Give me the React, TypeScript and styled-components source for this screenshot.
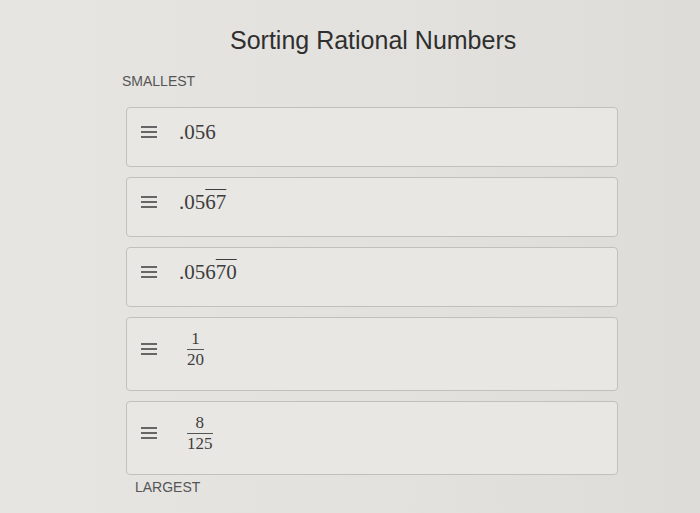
import React from "react";
import styled, { createGlobalStyle } from "styled-components";

const GlobalStyle = createGlobalStyle`
    html, body {
        margin: 0;
        padding: 0;
        background-color: #e4e3e0;
    }
`;

const Page = styled.div`
    width: 700px;
    height: 513px;
    box-sizing: border-box;
    padding: 24px 82px 0 122px;
    font-family: "Liberation Sans", Arial, sans-serif;
    color: #3a3a3a;
    background: linear-gradient(90deg, #e6e5e2 0%, #e2e1de 60%, #dedcd8 100%);
`;

const Title = styled.h1`
    margin: 0 0 16px 108px;
    font-size: 25px;
    font-weight: 400;
    color: #2f2f2f;
    line-height: 32px;
`;

const EndLabel = styled.div<{ $indent?: number }>`
    font-size: 14px;
    color: #555;
    line-height: 18px;
    margin-left: ${(p) => p.$indent ?? 0}px;
`;

const List = styled.div`
    display: flex;
    flex-direction: column;
    gap: 10px;
    margin: 17px 0 3px 4px;
`;

const Card = styled.div<{ $tall?: boolean }>`
    display: flex;
    align-items: center;
    gap: 22px;
    box-sizing: border-box;
    height: ${(p) => (p.$tall ? 74 : 60)}px;
    padding: 0 0 10px 14px;
    border: 1px solid #c1c0bd;
    border-radius: 4px;
    background-color: #e8e7e4;
`;

const Handle = styled.div`
    display: flex;
    flex-direction: column;
    gap: 3px;
    width: 16px;
    span {
        display: block;
        height: 2px;
        background-color: #666;
    }
`;

const Value = styled.div`
    font-family: "Liberation Serif", "Times New Roman", serif;
    font-size: 21px;
    color: #3d3d3d;
`;

const Repeat = styled.span`
    text-decoration: overline;
    text-decoration-thickness: 1px;
`;

const Fraction = styled.div`
    display: inline-flex;
    flex-direction: column;
    align-items: center;
    margin-left: 8px;
    font-family: "Liberation Serif", "Times New Roman", serif;
    font-size: 17px;
    color: #3d3d3d;
    line-height: 19px;
`;

const Numerator = styled.span`
    padding: 0 2px 1px;
    border-bottom: 1px solid #555;
    align-self: stretch;
    text-align: center;
`;

const DragHandle = () => (
    <Handle>
        <span />
        <span />
        <span />
    </Handle>
);

const App: React.FC = () => {
    return (
        <Page>
            <GlobalStyle />
            <Title>Sorting Rational Numbers</Title>
            <EndLabel>SMALLEST</EndLabel>
            <List>
                <Card>
                    <DragHandle />
                    <Value>.056</Value>
                </Card>
                <Card>
                    <DragHandle />
                    <Value>
                        .05<Repeat>67</Repeat>
                    </Value>
                </Card>
                <Card>
                    <DragHandle />
                    <Value>
                        .056<Repeat>70</Repeat>
                    </Value>
                </Card>
                <Card $tall>
                    <DragHandle />
                    <Fraction>
                        <Numerator>1</Numerator>
                        <span>20</span>
                    </Fraction>
                </Card>
                <Card $tall>
                    <DragHandle />
                    <Fraction>
                        <Numerator>8</Numerator>
                        <span>125</span>
                    </Fraction>
                </Card>
            </List>
            <EndLabel $indent={13}>LARGEST</EndLabel>
        </Page>
    );
};

export default App;
